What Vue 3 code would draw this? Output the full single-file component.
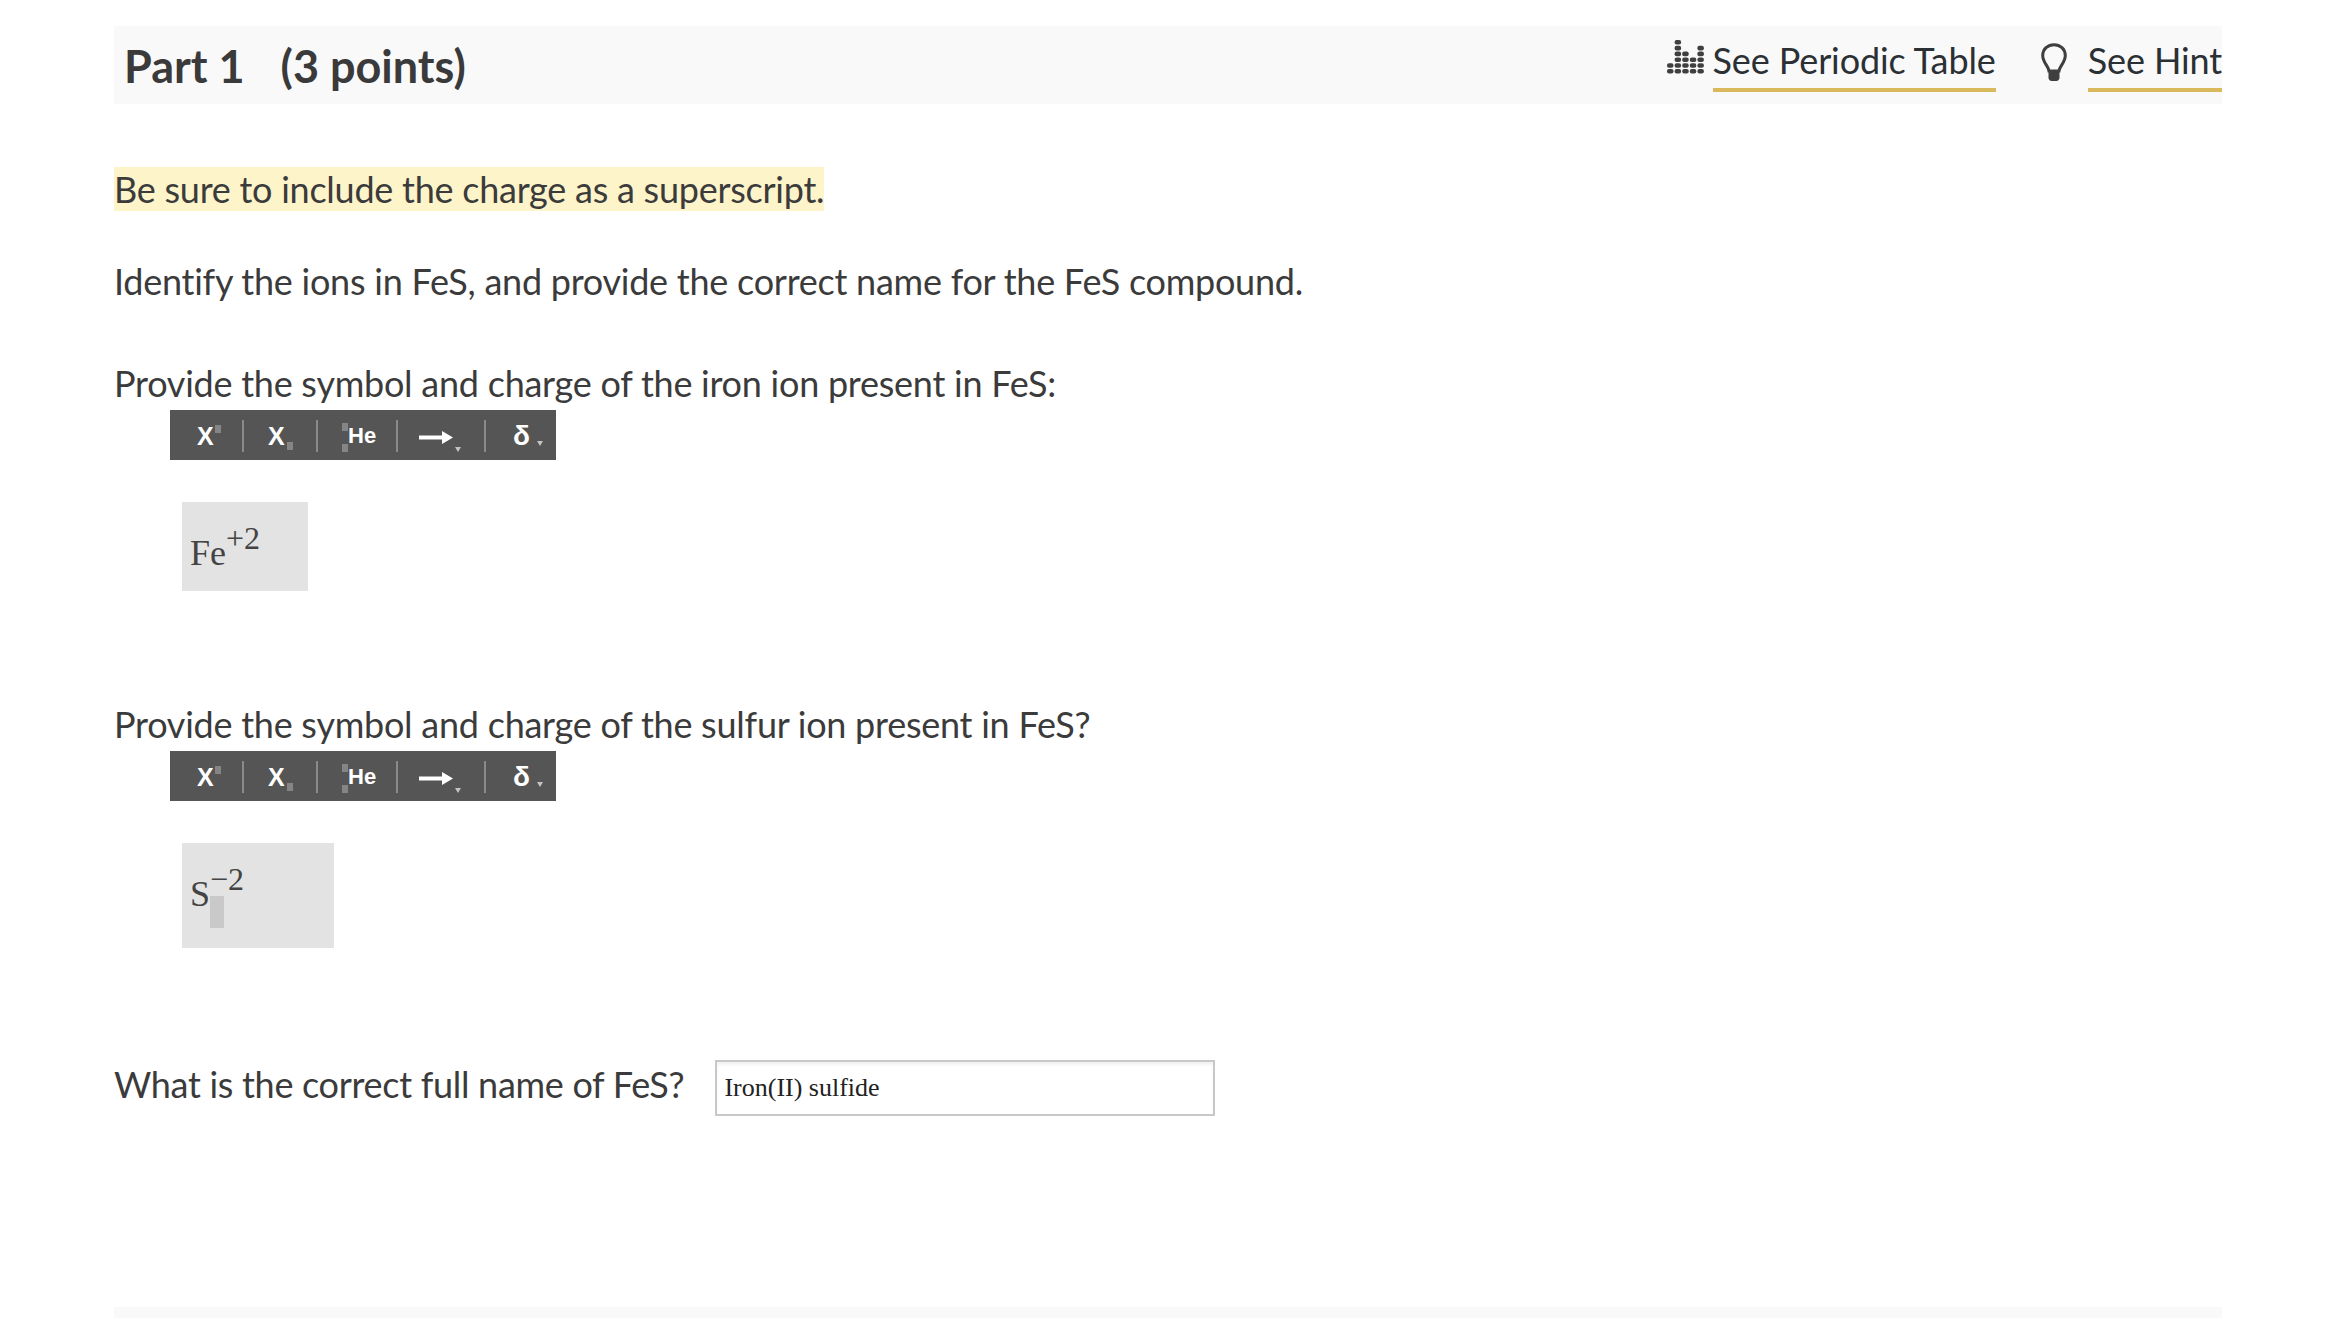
<template>
  <div class="page">
    <header class="part-head">
      <h2 class="part-title"><span>Part 1</span><span>(3 points)</span></h2>
      <div class="part-links">
        <a class="part-link">
          <svg class="icon-table" width="37" height="35" viewBox="0 0 37 35">
            <g fill="#3f3f3f">
              <rect v-for="d in tableDots" :key="d.x + '-' + d.y" :x="d.x" :y="d.y" width="6.500" height="4.600" rx="2" />
            </g>
          </svg>
          <span>See Periodic Table</span>
        </a>
        <a class="part-link hint">
          <svg class="icon-bulb" width="26" height="38" viewBox="0 0 26 38">
            <path d="M8 28C7.500 23 1.700 19.500 1.700 12.500 1.700 6 6.800 1.700 13 1.700S24.300 6 24.300 12.500C24.300 19.500 18.500 23 18 28Z" fill="none" stroke="#3f3f3f" stroke-width="3" />
            <path d="M7.500 29h11v6c0 1.500-1.500 3-3 3h-5c-1.500 0-3-1.500-3-3Z" fill="#3f3f3f" />
          </svg>
          <span>See Hint</span>
        </a>
      </div>
    </header>

    <p class="note"><mark>Be sure to include the charge as a superscript.</mark></p>
    <p class="intro">Identify the ions in FeS, and provide the correct name for the FeS compound.</p>

    <section v-for="q in questions" :key="q.prompt" class="question">
      <p class="prompt">{{ q.prompt }}</p>
      <div class="toolbar">
        <span class="tool tool-sup">X<i class="slot"></i></span>
        <span class="tool tool-sub">X<i class="slot"></i></span>
        <span class="tool tool-he"><b class="slots"><i class="slot"></i><i class="slot"></i></b>He</span>
        <span class="tool tool-arrow">
          <svg width="34" height="13" viewBox="0 0 34 13"><path d="M0 4.500h23V0l11 6.500-11 6.500V8.500H0Z" fill="#fff" /></svg>
          <i class="caret"></i>
        </span>
        <span class="tool tool-delta">δ<i class="caret"></i></span>
      </div>
      <div class="answer" :class="q.cls">
        <span class="base">{{ q.base }}</span><sup>{{ q.charge }}</sup>
        <i v-if="q.cursor" class="cursor"></i>
      </div>
    </section>

    <div class="name-row">
      <label class="name-label" for="full-name">What is the correct full name of FeS?</label>
      <input id="full-name" class="name-input" type="text" value="Iron(II) sulfide" />
    </div>

    <div class="footer-bar"></div>
  </div>
</template>

<script setup>
// rows counted from the bottom for each of the five columns
const heights = [2, 6, 4, 3, 5]
const tableDots = []
heights.forEach((h, col) => {
  for (let i = 0; i < h; i++) {
    tableDots.push({ x: col * 7.6, y: 30 - i * 5.8 })
  }
})

const questions = [
  { prompt: 'Provide the symbol and charge of the iron ion present in FeS:', base: 'Fe', charge: '+2', cls: 'answer-fe', cursor: false },
  { prompt: 'Provide the symbol and charge of the sulfur ion present in FeS?', base: 'S', charge: '−2', cls: 'answer-s', cursor: true },
]
</script>

<style>
body {
  margin: 0;
  background: #fff;
}
</style>

<style scoped>
.page {
  width: 2108px;
  height: 1318px;
  margin-left: 114px;
  padding-top: 26px;
  box-sizing: border-box;
  font-family: Lato, "Liberation Sans", sans-serif;
  color: #3b3b3b;
  font-size: 36px;
  letter-spacing: -0.25px;
  overflow: hidden;
  position: relative;
}
.part-head {
  height: 78px;
  background: #f9f9f9;
  display: flex;
  justify-content: space-between;
  padding-left: 10px;
}
.part-title {
  margin: 0;
  display: flex;
  gap: 36px;
  font-size: 45px;
  font-weight: 700;
  line-height: 80px;
  letter-spacing: 0;
  color: #3a3a3a;
}
.part-links {
  display: flex;
  gap: 45px;
  height: 66px;
}
.part-link {
  display: flex;
  align-items: flex-start;
  gap: 9px;
  font-size: 36px;
  letter-spacing: -0.12px;
  color: #2b3034;
}
.part-link.hint { gap: 21px; }
.part-link span {
  height: 66px;
  line-height: 69px;
  border-bottom: 4px solid #d9b95b;
  box-sizing: border-box;
}
.icon-table { margin-top: 13px; }
.icon-bulb { margin-top: 17px; }

.note {
  margin: 63px 0 0;
  line-height: 44px;
}
.note mark {
  background: #fdf4c9;
  color: inherit;
  display: inline-block;
}
.intro {
  margin: 48px 0 0;
  line-height: 44px;
}
.intro + .question { margin-top: 58px; }
.question + .question { margin-top: 111px; }
.prompt {
  margin: 0;
  line-height: 44px;
}
.toolbar {
  margin: 5px 0 0 56px;
  width: 386px;
  height: 50px;
  box-sizing: border-box;
  padding-top: 2px;
  background: #555;
  display: flex;
  align-items: center;
  color: #fff;
  font-family: "Liberation Sans", Arial, sans-serif;
  font-weight: 700;
  font-size: 25px;
  letter-spacing: 0;
}
.tool {
  height: 32px;
  display: flex;
  align-items: center;
  border-right: 2px solid #8a8a8a;
  position: relative;
  flex: none;
  box-sizing: content-box;
}
.tool-sup { padding-left: 27px; width: 45px; }
.tool-sub { width: 48px; padding-left: 24px; }
.tool-he { width: 48px; padding-left: 30px; font-size: 22px; }
.tool-arrow { width: 65px; padding-left: 21px; }
.tool-arrow svg { margin-top: 3px; }
.tool-delta { width: 43px; padding-left: 27px; border-right: 0; font-size: 28px; }
.slot {
  display: block;
  width: 6px;
  height: 8px;
  background: #858585;
}
.tool-sup .slot { position: absolute; left: 45px; top: 5px; }
.tool-sub .slot { position: absolute; left: 43px; top: 22px; }
.slots {
  position: absolute;
  left: 24px;
  top: 3px;
  height: 29px;
  display: flex;
  flex-direction: column;
  justify-content: space-between;
}
.caret {
  position: absolute;
  width: 0;
  height: 0;
  border-left: 3px solid transparent;
  border-right: 3px solid transparent;
  border-top: 5px solid #c4c4c4;
}
.tool-arrow .caret { left: 57px; top: 27px; }
.tool-delta .caret { left: 51px; top: 21px; }

.answer {
  margin: 42px 0 0 68px;
  background: #e3e3e3;
  font-family: "Liberation Serif", "Times New Roman", serif;
  font-size: 36px;
  letter-spacing: 0;
  position: relative;
  box-sizing: border-box;
  padding-left: 8px;
  color: #444;
}
.answer-fe {
  width: 126px;
  height: 89px;
  line-height: 102px;
}
.answer-s {
  width: 152px;
  height: 105px;
  line-height: 102px;
}
.answer sup {
  font-size: 32px;
  line-height: 0;
  vertical-align: 16px;
}
.cursor {
  position: absolute;
  left: 28px;
  top: 53px;
  width: 14px;
  height: 32px;
  background: #c9c9c9;
}

.name-row {
  position: absolute;
  left: 0;
  top: 1060px;
  display: flex;
  align-items: center;
  gap: 31px;
}
.name-label {
  line-height: 44px;
  margin-top: -9px;
  letter-spacing: -0.3px;
}
.name-input {
  width: 500px;
  height: 56px;
  box-sizing: border-box;
  border: 2px solid #c8c8c8;
  box-shadow: inset 0 3px 3px #f3f3f3;
  padding: 0 7px;
  font-family: "Liberation Serif", "Times New Roman", serif;
  font-size: 26px;
  letter-spacing: 0;
  color: #222;
  background: #fff;
  outline: none;
}
.footer-bar {
  position: absolute;
  left: 0;
  right: 0;
  top: 1307px;
  height: 11px;
  background: #f9f9f9;
}
</style>
